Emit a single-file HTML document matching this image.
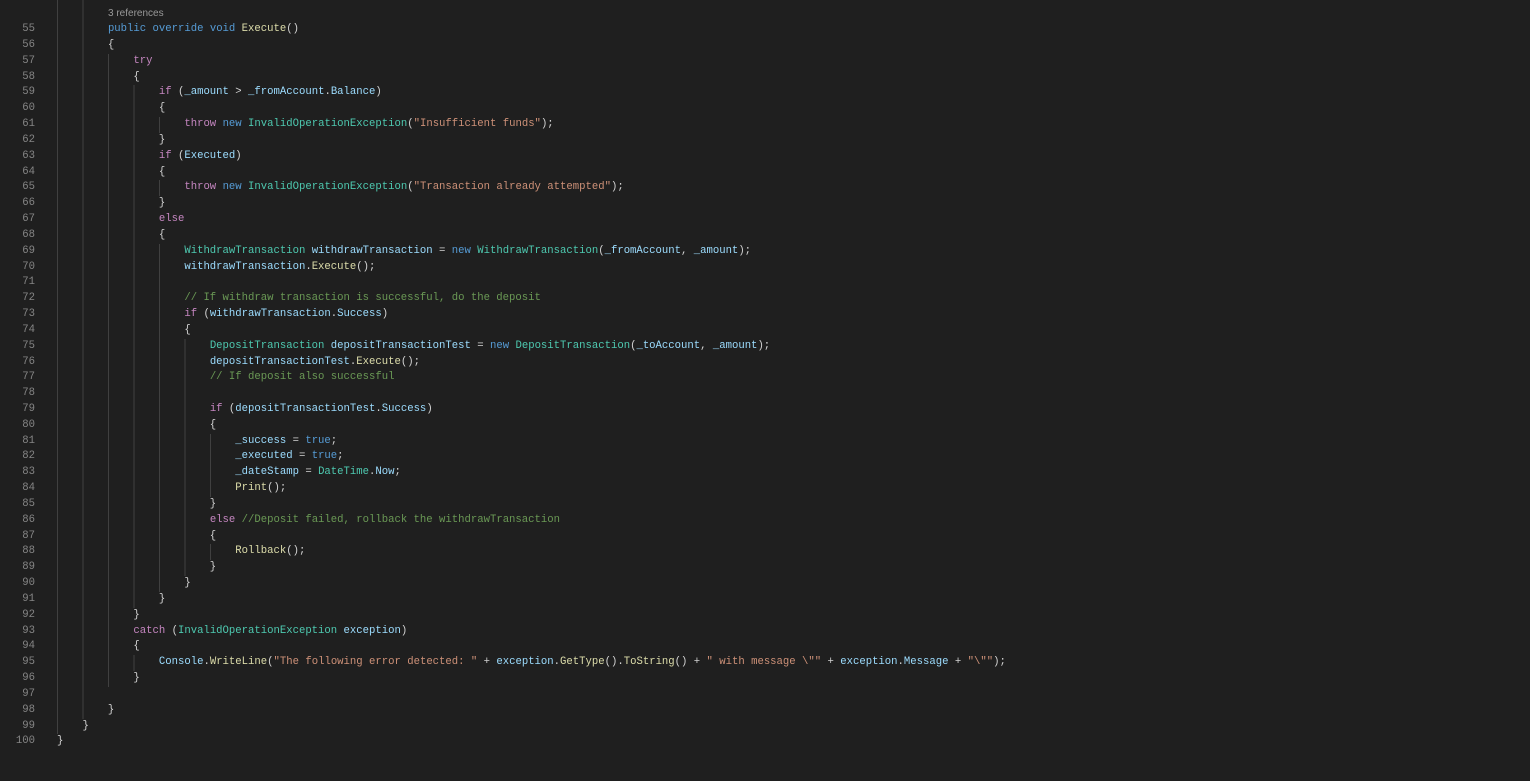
<!DOCTYPE html>
<html><head><meta charset="utf-8"><style>
html,body{margin:0;padding:0;background:#1f1f1f;width:1530px;height:781px;overflow:hidden}
#c{position:absolute;left:0;top:6.3px;width:1530px}
.l{position:relative;height:15.84px;line-height:15.84px;font-family:"Liberation Mono",monospace;font-size:10.62px;color:#d4d4d4;white-space:pre;
background-image:repeating-linear-gradient(to right,#404040 0 1px,transparent 1px 25.48px);background-repeat:no-repeat;background-position:57px 0}
.n{position:absolute;left:0;width:35px;text-align:right;color:#858585}
.t{position:absolute;left:57px}
.cl{font-family:"Liberation Sans",sans-serif;font-size:10px;color:#999;position:absolute;left:108px}
.k{color:#569cd6}.c{color:#c586c0}.m{color:#dcdcaa}.y{color:#4ec9b0}.v{color:#9cdcfe}.s{color:#ce9178}.g{color:#6a9955}
</style></head><body>
<div style="position:absolute;left:0;top:0;width:100px;height:7px;background-image:repeating-linear-gradient(to right,#404040 0 1px,transparent 1px 25.48px);background-repeat:no-repeat;background-position:57px 0;background-size:50.96px 100%"></div>
<div id="c">
<div class="l" style="background-size:50.96px 100%"><span class="cl">3 references</span></div>
<div class="l" style="background-size:50.96px 100%"><span class="n">55</span><span class="t">        <span class="k">public</span> <span class="k">override</span> <span class="k">void</span> <span class="m">Execute</span>()</span></div>
<div class="l" style="background-size:50.96px 100%"><span class="n">56</span><span class="t">        {</span></div>
<div class="l" style="background-size:76.44px 100%"><span class="n">57</span><span class="t">            <span class="c">try</span></span></div>
<div class="l" style="background-size:76.44px 100%"><span class="n">58</span><span class="t">            {</span></div>
<div class="l" style="background-size:101.92px 100%"><span class="n">59</span><span class="t">                <span class="c">if</span> (<span class="v">_amount</span> &gt; <span class="v">_fromAccount</span>.<span class="v">Balance</span>)</span></div>
<div class="l" style="background-size:101.92px 100%"><span class="n">60</span><span class="t">                {</span></div>
<div class="l" style="background-size:127.4px 100%"><span class="n">61</span><span class="t">                    <span class="c">throw</span> <span class="k">new</span> <span class="y">InvalidOperationException</span>(<span class="s">"Insufficient funds"</span>);</span></div>
<div class="l" style="background-size:101.92px 100%"><span class="n">62</span><span class="t">                }</span></div>
<div class="l" style="background-size:101.92px 100%"><span class="n">63</span><span class="t">                <span class="c">if</span> (<span class="v">Executed</span>)</span></div>
<div class="l" style="background-size:101.92px 100%"><span class="n">64</span><span class="t">                {</span></div>
<div class="l" style="background-size:127.4px 100%"><span class="n">65</span><span class="t">                    <span class="c">throw</span> <span class="k">new</span> <span class="y">InvalidOperationException</span>(<span class="s">"Transaction already attempted"</span>);</span></div>
<div class="l" style="background-size:101.92px 100%"><span class="n">66</span><span class="t">                }</span></div>
<div class="l" style="background-size:101.92px 100%"><span class="n">67</span><span class="t">                <span class="c">else</span></span></div>
<div class="l" style="background-size:101.92px 100%"><span class="n">68</span><span class="t">                {</span></div>
<div class="l" style="background-size:127.4px 100%"><span class="n">69</span><span class="t">                    <span class="y">WithdrawTransaction</span> <span class="v">withdrawTransaction</span> = <span class="k">new</span> <span class="y">WithdrawTransaction</span>(<span class="v">_fromAccount</span>, <span class="v">_amount</span>);</span></div>
<div class="l" style="background-size:127.4px 100%"><span class="n">70</span><span class="t">                    <span class="v">withdrawTransaction</span>.<span class="m">Execute</span>();</span></div>
<div class="l" style="background-size:127.4px 100%"><span class="n">71</span></div>
<div class="l" style="background-size:127.4px 100%"><span class="n">72</span><span class="t">                    <span class="g">// If withdraw transaction is successful, do the deposit</span></span></div>
<div class="l" style="background-size:127.4px 100%"><span class="n">73</span><span class="t">                    <span class="c">if</span> (<span class="v">withdrawTransaction</span>.<span class="v">Success</span>)</span></div>
<div class="l" style="background-size:127.4px 100%"><span class="n">74</span><span class="t">                    {</span></div>
<div class="l" style="background-size:152.88px 100%"><span class="n">75</span><span class="t">                        <span class="y">DepositTransaction</span> <span class="v">depositTransactionTest</span> = <span class="k">new</span> <span class="y">DepositTransaction</span>(<span class="v">_toAccount</span>, <span class="v">_amount</span>);</span></div>
<div class="l" style="background-size:152.88px 100%"><span class="n">76</span><span class="t">                        <span class="v">depositTransactionTest</span>.<span class="m">Execute</span>();</span></div>
<div class="l" style="background-size:152.88px 100%"><span class="n">77</span><span class="t">                        <span class="g">// If deposit also successful</span></span></div>
<div class="l" style="background-size:152.88px 100%"><span class="n">78</span></div>
<div class="l" style="background-size:152.88px 100%"><span class="n">79</span><span class="t">                        <span class="c">if</span> (<span class="v">depositTransactionTest</span>.<span class="v">Success</span>)</span></div>
<div class="l" style="background-size:152.88px 100%"><span class="n">80</span><span class="t">                        {</span></div>
<div class="l" style="background-size:178.36px 100%"><span class="n">81</span><span class="t">                            <span class="v">_success</span> = <span class="k">true</span>;</span></div>
<div class="l" style="background-size:178.36px 100%"><span class="n">82</span><span class="t">                            <span class="v">_executed</span> = <span class="k">true</span>;</span></div>
<div class="l" style="background-size:178.36px 100%"><span class="n">83</span><span class="t">                            <span class="v">_dateStamp</span> = <span class="y">DateTime</span>.<span class="v">Now</span>;</span></div>
<div class="l" style="background-size:178.36px 100%"><span class="n">84</span><span class="t">                            <span class="m">Print</span>();</span></div>
<div class="l" style="background-size:152.88px 100%"><span class="n">85</span><span class="t">                        }</span></div>
<div class="l" style="background-size:152.88px 100%"><span class="n">86</span><span class="t">                        <span class="c">else</span> <span class="g">//Deposit failed, rollback the withdrawTransaction</span></span></div>
<div class="l" style="background-size:152.88px 100%"><span class="n">87</span><span class="t">                        {</span></div>
<div class="l" style="background-size:178.36px 100%"><span class="n">88</span><span class="t">                            <span class="m">Rollback</span>();</span></div>
<div class="l" style="background-size:152.88px 100%"><span class="n">89</span><span class="t">                        }</span></div>
<div class="l" style="background-size:127.4px 100%"><span class="n">90</span><span class="t">                    }</span></div>
<div class="l" style="background-size:101.92px 100%"><span class="n">91</span><span class="t">                }</span></div>
<div class="l" style="background-size:76.44px 100%"><span class="n">92</span><span class="t">            }</span></div>
<div class="l" style="background-size:76.44px 100%"><span class="n">93</span><span class="t">            <span class="c">catch</span> (<span class="y">InvalidOperationException</span> <span class="v">exception</span>)</span></div>
<div class="l" style="background-size:76.44px 100%"><span class="n">94</span><span class="t">            {</span></div>
<div class="l" style="background-size:101.92px 100%"><span class="n">95</span><span class="t">                <span class="v">Console</span>.<span class="m">WriteLine</span>(<span class="s">"The following error detected: "</span> + <span class="v">exception</span>.<span class="m">GetType</span>().<span class="m">ToString</span>() + <span class="s">" with message \""</span> + <span class="v">exception</span>.<span class="v">Message</span> + <span class="s">"\""</span>);</span></div>
<div class="l" style="background-size:76.44px 100%"><span class="n">96</span><span class="t">            }</span></div>
<div class="l" style="background-size:50.96px 100%"><span class="n">97</span></div>
<div class="l" style="background-size:50.96px 100%"><span class="n">98</span><span class="t">        }</span></div>
<div class="l" style="background-size:25.48px 100%"><span class="n">99</span><span class="t">    }</span></div>
<div class="l" style="background-size:0 0"><span class="n">100</span><span class="t">}</span></div>
</div>
</body></html>
